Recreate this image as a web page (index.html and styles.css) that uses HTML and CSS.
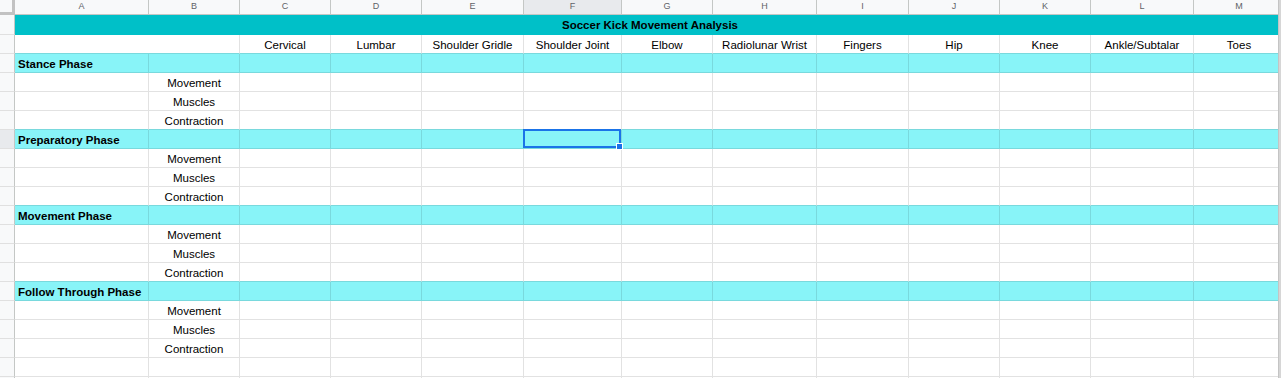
FILE: index.html
```html
<!DOCTYPE html>
<html>
<head>
<meta charset="utf-8">
<link rel="stylesheet" href="styles.css">
</head>
<body>
<div class="frame">
<div class="sheet">
  <div class="row colhdr">
    <div class="corner"></div>
    <div class="ch">A</div><div class="ch">B</div><div class="ch">C</div><div class="ch">D</div><div class="ch">E</div><div class="ch sel">F</div><div class="ch">G</div><div class="ch">H</div><div class="ch">I</div><div class="ch">J</div><div class="ch">K</div><div class="ch">L</div><div class="ch">M</div>
  </div>
  <div class="row title">
    <div class="rh"></div>
    <div class="c titlecell">Soccer Kick Movement Analysis</div>
  </div>
  <div class="row">
    <div class="rh"></div>
    <div class="c span2"></div>
    <div class="c ctr">Cervical</div><div class="c ctr">Lumbar</div><div class="c ctr">Shoulder Gridle</div><div class="c ctr">Shoulder Joint</div><div class="c ctr">Elbow</div><div class="c ctr">Radiolunar Wrist</div><div class="c ctr">Fingers</div><div class="c ctr">Hip</div><div class="c ctr">Knee</div><div class="c ctr">Ankle/Subtalar</div><div class="c ctr">Toes</div>
  </div>

  <div class="row phase">
    <div class="rh"></div>
    <div class="c lbl">Stance Phase</div><div class="c"></div><div class="c"></div><div class="c"></div><div class="c"></div><div class="c"></div><div class="c"></div><div class="c"></div><div class="c"></div><div class="c"></div><div class="c"></div><div class="c"></div><div class="c"></div>
  </div>
  <div class="row">
    <div class="rh"></div>
    <div class="c"></div><div class="c ctr">Movement</div><div class="c"></div><div class="c"></div><div class="c"></div><div class="c"></div><div class="c"></div><div class="c"></div><div class="c"></div><div class="c"></div><div class="c"></div><div class="c"></div><div class="c"></div>
  </div>
  <div class="row">
    <div class="rh"></div>
    <div class="c"></div><div class="c ctr">Muscles</div><div class="c"></div><div class="c"></div><div class="c"></div><div class="c"></div><div class="c"></div><div class="c"></div><div class="c"></div><div class="c"></div><div class="c"></div><div class="c"></div><div class="c"></div>
  </div>
  <div class="row">
    <div class="rh"></div>
    <div class="c"></div><div class="c ctr">Contraction</div><div class="c"></div><div class="c"></div><div class="c"></div><div class="c"></div><div class="c"></div><div class="c"></div><div class="c"></div><div class="c"></div><div class="c"></div><div class="c"></div><div class="c"></div>
  </div>

  <div class="row phase">
    <div class="rh sel"></div>
    <div class="c lbl">Preparatory Phase</div><div class="c"></div><div class="c"></div><div class="c"></div><div class="c"></div><div class="c selcell"><div class="selection"><div class="handle"></div></div></div><div class="c"></div><div class="c"></div><div class="c"></div><div class="c"></div><div class="c"></div><div class="c"></div><div class="c"></div>
  </div>
  <div class="row">
    <div class="rh"></div>
    <div class="c"></div><div class="c ctr">Movement</div><div class="c"></div><div class="c"></div><div class="c"></div><div class="c"></div><div class="c"></div><div class="c"></div><div class="c"></div><div class="c"></div><div class="c"></div><div class="c"></div><div class="c"></div>
  </div>
  <div class="row">
    <div class="rh"></div>
    <div class="c"></div><div class="c ctr">Muscles</div><div class="c"></div><div class="c"></div><div class="c"></div><div class="c"></div><div class="c"></div><div class="c"></div><div class="c"></div><div class="c"></div><div class="c"></div><div class="c"></div><div class="c"></div>
  </div>
  <div class="row">
    <div class="rh"></div>
    <div class="c"></div><div class="c ctr">Contraction</div><div class="c"></div><div class="c"></div><div class="c"></div><div class="c"></div><div class="c"></div><div class="c"></div><div class="c"></div><div class="c"></div><div class="c"></div><div class="c"></div><div class="c"></div>
  </div>

  <div class="row phase">
    <div class="rh"></div>
    <div class="c lbl">Movement Phase</div><div class="c"></div><div class="c"></div><div class="c"></div><div class="c"></div><div class="c"></div><div class="c"></div><div class="c"></div><div class="c"></div><div class="c"></div><div class="c"></div><div class="c"></div><div class="c"></div>
  </div>
  <div class="row">
    <div class="rh"></div>
    <div class="c"></div><div class="c ctr">Movement</div><div class="c"></div><div class="c"></div><div class="c"></div><div class="c"></div><div class="c"></div><div class="c"></div><div class="c"></div><div class="c"></div><div class="c"></div><div class="c"></div><div class="c"></div>
  </div>
  <div class="row">
    <div class="rh"></div>
    <div class="c"></div><div class="c ctr">Muscles</div><div class="c"></div><div class="c"></div><div class="c"></div><div class="c"></div><div class="c"></div><div class="c"></div><div class="c"></div><div class="c"></div><div class="c"></div><div class="c"></div><div class="c"></div>
  </div>
  <div class="row">
    <div class="rh"></div>
    <div class="c"></div><div class="c ctr">Contraction</div><div class="c"></div><div class="c"></div><div class="c"></div><div class="c"></div><div class="c"></div><div class="c"></div><div class="c"></div><div class="c"></div><div class="c"></div><div class="c"></div><div class="c"></div>
  </div>

  <div class="row phase">
    <div class="rh"></div>
    <div class="c lbl">Follow Through Phase</div><div class="c"></div><div class="c"></div><div class="c"></div><div class="c"></div><div class="c"></div><div class="c"></div><div class="c"></div><div class="c"></div><div class="c"></div><div class="c"></div><div class="c"></div><div class="c"></div>
  </div>
  <div class="row">
    <div class="rh"></div>
    <div class="c"></div><div class="c ctr">Movement</div><div class="c"></div><div class="c"></div><div class="c"></div><div class="c"></div><div class="c"></div><div class="c"></div><div class="c"></div><div class="c"></div><div class="c"></div><div class="c"></div><div class="c"></div>
  </div>
  <div class="row">
    <div class="rh"></div>
    <div class="c"></div><div class="c ctr">Muscles</div><div class="c"></div><div class="c"></div><div class="c"></div><div class="c"></div><div class="c"></div><div class="c"></div><div class="c"></div><div class="c"></div><div class="c"></div><div class="c"></div><div class="c"></div>
  </div>
  <div class="row">
    <div class="rh"></div>
    <div class="c"></div><div class="c ctr">Contraction</div><div class="c"></div><div class="c"></div><div class="c"></div><div class="c"></div><div class="c"></div><div class="c"></div><div class="c"></div><div class="c"></div><div class="c"></div><div class="c"></div><div class="c"></div>
  </div>
  <div class="row">
    <div class="rh"></div>
    <div class="c"></div><div class="c"></div><div class="c"></div><div class="c"></div><div class="c"></div><div class="c"></div><div class="c"></div><div class="c"></div><div class="c"></div><div class="c"></div><div class="c"></div><div class="c"></div><div class="c"></div>
  </div>
  <div class="row">
    <div class="rh"></div>
    <div class="c"></div><div class="c"></div><div class="c"></div><div class="c"></div><div class="c"></div><div class="c"></div><div class="c"></div><div class="c"></div><div class="c"></div><div class="c"></div><div class="c"></div><div class="c"></div><div class="c"></div>
  </div>
</div>
<div class="vbar"></div>
</div>
</body>
</html>
```

FILE: styles.css
```css
html, body {
  margin: 0;
  padding: 0;
  overflow: hidden;
  background: #ffffff;
}

.frame {
  display: flex;
  width: 1281px;
  height: 378px;
  overflow: hidden;
}

.sheet {
  width: 1278px;
  height: 378px;
  overflow: hidden;
  flex: none;
  font-family: "Liberation Sans", Arial, sans-serif;
  font-size: 11.5px;
  color: #000000;
}

.vbar {
  flex: 1;
  background: #d6d6d6;
  border-left: 1px solid #c4c4c4;
}

.row {
  display: grid;
  grid-template-columns: 15px 134px 91px 91px 91px 102px 98px 91px 104px 92px 91px 91px 103px 91px;
  width: 1285px;
  height: 19px;
}

.c {
  box-sizing: border-box;
  height: 19px;
  border-right: 1px solid #e2e2e2;
  border-bottom: 1px solid #e2e2e2;
  padding: 3px 3px 1px;
  line-height: 14px;
  white-space: nowrap;
  overflow: visible;
}

.ctr {
  text-align: center;
}

.rh {
  box-sizing: border-box;
  height: 19px;
  background: #f8f9fa;
  border-right: 1px solid #c4c7c5;
  border-bottom: 1px solid #e0e0e0;
}

.rh.sel {
  background: #e8eaed;
}

/* column header row */
.colhdr {
  height: 15px;
}

.corner {
  box-sizing: border-box;
  height: 15px;
  background: #f8f9fa;
  border-right: 3px solid #c2c2c2;
  border-bottom: 3px solid #c2c2c2;
}

.ch {
  box-sizing: border-box;
  height: 15px;
  background: #f8f9fa;
  border-right: 1px solid #c4c7c5;
  border-bottom: 1px solid #c4c7c5;
  font-size: 9px;
  line-height: 11px;
  padding-top: 1px;
  text-align: center;
  color: #5f6368;
}

.ch.sel {
  background: #e8eaed;
}

/* title row */
.title {
  height: 20px;
}

.title .rh {
  height: 20px;
}

.titlecell {
  grid-column: span 13;
  height: 20px;
  background: #00c0c8;
  border: none;
  text-align: center;
  font-weight: bold;
  padding: 3px 0 2px;
}

.span2 {
  grid-column: span 2;
}

/* phase rows */
.phase .c {
  background: #88f4f8;
  border-right-color: #79d9dd;
  border-bottom-color: #79d9dd;
}

.row:has(+ .phase) .c {
  border-bottom-color: #79d9dd;
}

.lbl {
  font-weight: bold;
}

/* selection */
.selcell {
  position: relative;
}

.selection {
  position: absolute;
  left: -1px;
  top: -1px;
  right: 0;
  bottom: 0;
  border: 2px solid #1a73e8;
}

.handle {
  position: absolute;
  right: -4px;
  bottom: -4px;
  width: 7px;
  height: 7px;
  box-sizing: border-box;
  background: #1a73e8;
  border: 1px solid #ffffff;
}
```
